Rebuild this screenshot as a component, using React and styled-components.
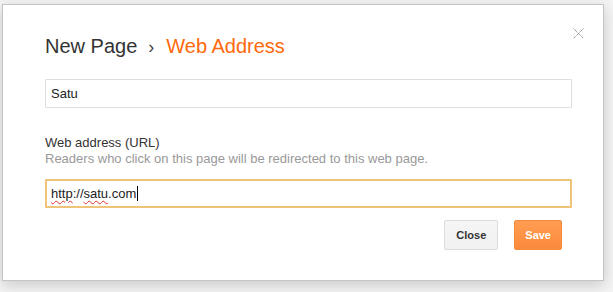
import React from "react";
import styled, { createGlobalStyle } from "styled-components";

const Global = createGlobalStyle`
  html, body {
    margin: 0;
    padding: 0;
    background: #f4f4f4;
    font-family: Arial, "Liberation Sans", sans-serif;
  }
`;

const Page = styled.div`
  width: 613px;
  height: 292px;
  overflow: hidden;
  padding: 4px 0 0 2px;
  box-sizing: border-box;
`;

const Dialog = styled.div`
  position: relative;
  box-sizing: border-box;
  width: 602px;
  height: 277px;
  background: #fff;
  border: 1px solid #c4c4c4;
  box-shadow: 0 4px 14px rgba(0, 0, 0, 0.18);
  padding: 29px 31px 0 42px;
`;

const CloseIcon = styled.button`
  position: absolute;
  top: 23px;
  right: 19px;
  width: 11px;
  height: 11px;
  padding: 0;
  border: 0;
  background: none;
  cursor: pointer;
  display: flex;
`;

const Title = styled.h1`
  margin: 0;
  font-size: 20px;
  line-height: 24px;
  font-weight: normal;
  color: #333;
  display: flex;
  align-items: baseline;
`;

const Crumb = styled.span`
  color: ${(p) => (p.$active ? "#ff6a0c" : "#333")};
`;

const Chevron = styled.span`
  margin: 0 12px 0 11px;
  color: #444;
  font-size: 18px;
`;

const Field = styled.div`
  box-sizing: border-box;
  height: 29px;
  display: flex;
  align-items: center;
  font-size: 13px;
  color: #222;
  background: #fff;
  border: ${(p) => (p.$focused ? "2px solid #efc478" : "1px solid #dedede")};
  border-radius: 1px;
  padding-left: ${(p) => (p.$focused ? "4px" : "5px")};
  margin-top: ${(p) => p.$top || 0}px;
`;

const Label = styled.div`
  margin-top: 27px;
  font-size: 13px;
  line-height: 16px;
  color: #333;
`;

const Hint = styled.div`
  font-size: 13px;
  line-height: 16px;
  color: #999;
`;

const Misspelt = styled.span`
  text-decoration: underline wavy #e03030;
  text-decoration-thickness: 1px;
  text-underline-offset: 2px;
`;

const Caret = styled.span`
  display: inline-block;
  width: 1px;
  height: 15px;
  background: #000;
  margin-left: 1px;
`;

const Actions = styled.div`
  display: flex;
  justify-content: flex-end;
  gap: 16px;
  margin-top: 12px;
  padding-right: 10px;
`;

const Button = styled.button`
  box-sizing: border-box;
  height: 30px;
  padding: 0 ${(p) => (p.$primary ? "10px" : "11px")};
  font-family: Arial, "Liberation Sans", sans-serif;
  font-size: 11px;
  font-weight: bold;
  border-radius: 2px;
  cursor: pointer;
  color: ${(p) => (p.$primary ? "#fff" : "#333")};
  border: 1px solid ${(p) => (p.$primary ? "#f58b3e" : "#dcdcdc")};
  background: ${(p) =>
    p.$primary
      ? "linear-gradient(#ff9d52, #fb8a3b)"
      : "linear-gradient(#f5f5f5, #f1f1f1)"};
`;

export default function App() {
  return (
    <>
      <Global />
      <Page>
        <Dialog>
          <CloseIcon aria-label="Close">
            <svg width="11" height="11" viewBox="0 0 11 11">
              <path
                d="M0.5 0.5 L10.5 10.5 M10.5 0.5 L0.5 10.5"
                stroke="#8a8a8a"
                strokeWidth="1"
                strokeDasharray="1.4 0.6"
                fill="none"
              />
            </svg>
          </CloseIcon>
          <Title>
            <Crumb>New Page</Crumb>
            <Chevron>›</Chevron>
            <Crumb $active>Web Address</Crumb>
          </Title>
          <Field $top={20}>Satu</Field>
          <Label>Web address (URL)</Label>
          <Hint>Readers who click on this page will be redirected to this web page.</Hint>
          <Field $top={12} $focused>
            <Misspelt>http</Misspelt>://<Misspelt>satu</Misspelt>.com
            <Caret />
          </Field>
          <Actions>
            <Button>Close</Button>
            <Button $primary>Save</Button>
          </Actions>
        </Dialog>
      </Page>
    </>
  );
}
